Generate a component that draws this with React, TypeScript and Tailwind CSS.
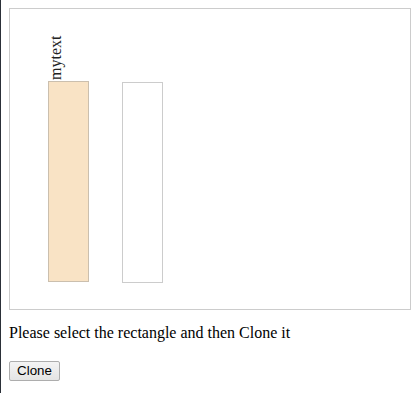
export default function App() {
  return (
    <div className="flex h-[393px] w-[420px] bg-white" style={{ fontFamily: '"Liberation Serif", "Times New Roman", serif' }}>
      <div className="w-[1px] shrink-0 bg-[#2b3038]" />
      <div className="p-2 text-[16px] text-black">
        <div className="w-[402px] h-[302px] border border-[#cccccc]">
          <svg width="400" height="300" className="block">
            <rect x="38.5" y="72.5" width="40" height="200" fill="#f9e3c5" stroke="#cbbfae" strokeWidth="1" />
            <rect x="112.5" y="73.5" width="40" height="200" fill="#ffffff" stroke="#cccccc" strokeWidth="1" />
            <text
              transform="translate(51,71) rotate(-90)"
              fontSize="16"
              fill="#222"
              style={{ fontFamily: '"Liberation Serif", "Times New Roman", serif' }}
            >
              mytext
            </text>
          </svg>
        </div>
        <p className="mt-[14px] mb-4 leading-[18px]">Please select the rectangle and then Clone it</p>
        <button
          className="w-[51px] h-[20px] text-center text-[13.33px] leading-none text-black border border-[#adadad] rounded-[2px] bg-gradient-to-b from-[#f4f4f4] to-[#e4e4e4]"
          style={{ fontFamily: '"Liberation Sans", Arial, sans-serif' }}
        >
          Clone
        </button>
      </div>
    </div>
  );
}
